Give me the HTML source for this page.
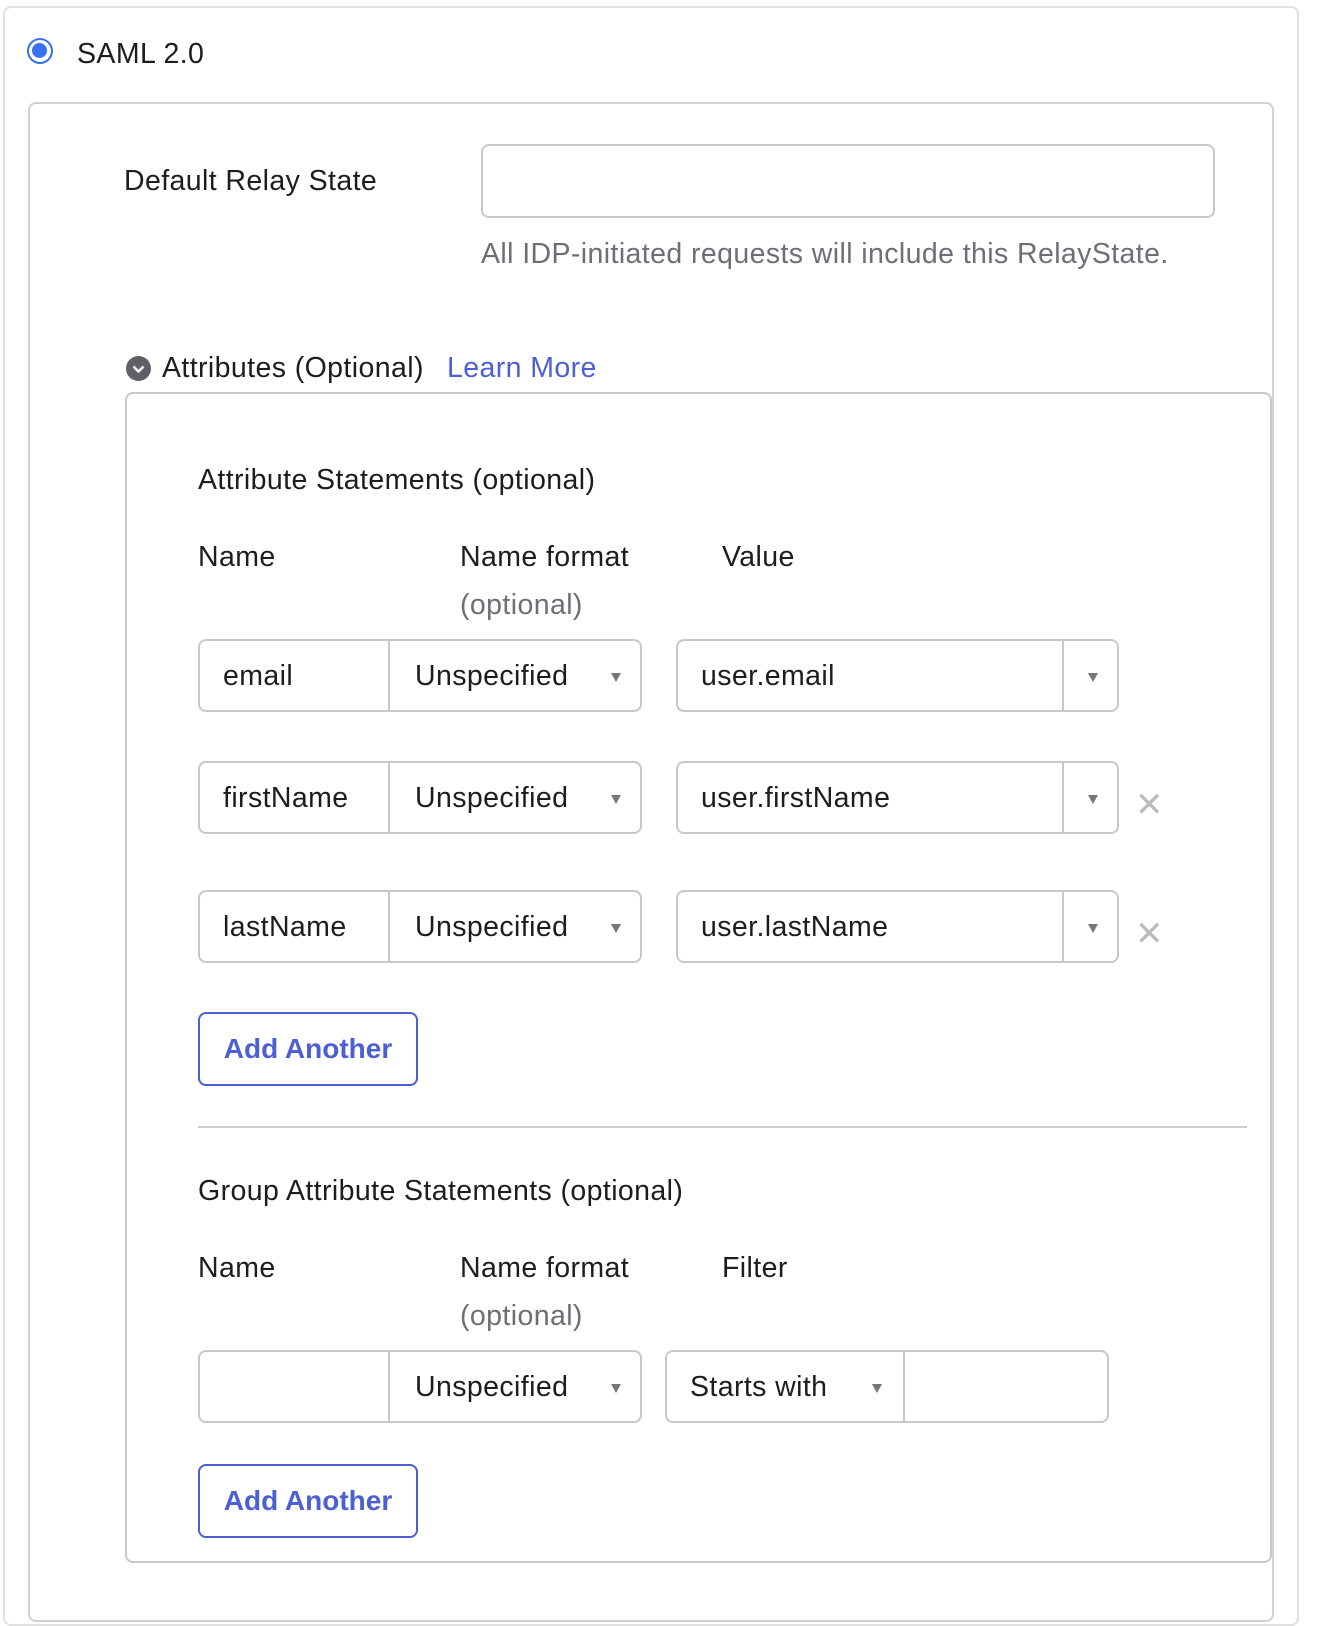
<!DOCTYPE html>
<html><head><style>
*{box-sizing:border-box;margin:0;padding:0}
body{width:1321px;height:1590px;background:#fff;font-family:"Liberation Sans",sans-serif;color:#1d1d21;position:relative;overflow:hidden}
.a{position:absolute}
.t{position:absolute;font-size:28.5px;letter-spacing:0.4px;white-space:nowrap;line-height:1}
.box{position:absolute;border:2px solid #c8c8c8;border-radius:8px;background:#fff}
.g{color:#6e6e78}
.div{position:absolute;top:0;bottom:0;width:2px;background:#c8c8c8}
.tri{position:absolute;width:0;height:0;border-left:5px solid transparent;border-right:5px solid transparent;border-top:9px solid #777}
.btn{position:absolute;border:2px solid #4c5fd5;border-radius:8px;color:#4c5fd5;font-weight:bold;font-size:28px;display:flex;align-items:center;justify-content:center}
.x{position:absolute;font-size:34px;color:#bbb;line-height:1}
</style></head><body>
<div class="box" style="left:3px;top:6px;width:1296px;height:1620px;border-color:#e0e0e0"></div>
<div class="a" style="left:27px;top:38px;width:26px;height:26px;border-radius:50%;border:2.5px solid #3a6ff0;background:#fff"><div class="a" style="left:3px;top:3px;width:15px;height:15px;border-radius:50%;background:#3a6ff0"></div></div>
<div class="t" style="left:77px;top:40px">SAML 2.0</div>
<div class="box" style="left:28px;top:102px;width:1246px;height:1520px;border-color:#d0d0d0"></div>
<div class="t" style="left:124px;top:167px">Default Relay State</div>
<div class="box" style="left:481px;top:144px;width:734px;height:74px"></div>
<div class="t g" style="left:481px;top:240px">All IDP-initiated requests will include this RelayState.</div>
<div class="a" style="left:126px;top:356px;width:25px;height:25px;border-radius:50%;background:#5f5f66"><svg width="25" height="25" viewBox="0 0 25 25"><path d="M7.5 10.5 L12.5 15.5 L17.5 10.5" stroke="#fff" stroke-width="2.5" fill="none"/></svg></div>
<div class="t" style="left:162px;top:354px">Attributes (Optional)</div>
<div class="t" style="left:447px;top:354px;color:#4c5fd5">Learn More</div>
<div class="box" style="left:125px;top:392px;width:1147px;height:1171px"></div>
<div class="t" style="left:198px;top:466px">Attribute Statements (optional)</div>
<div class="t" style="left:198px;top:543px">Name</div>
<div class="t" style="left:460px;top:543px">Name format</div>
<div class="t g" style="left:460px;top:591px">(optional)</div>
<div class="t" style="left:722px;top:543px">Value</div>

<div class="box" style="left:198px;top:639px;width:444px;height:73px"><div class="div" style="left:188px"></div><div class="t" style="left:23px;top:21px">email</div><div class="t" style="left:215px;top:21px">Unspecified</div><div class="tri" style="left:411px;top:32px"></div></div>
<div class="box" style="left:676px;top:639px;width:443px;height:73px"><div class="div" style="left:384px"></div><div class="t" style="left:23px;top:21px">user.email</div><div class="tri" style="left:410px;top:32px"></div></div>

<div class="box" style="left:198px;top:761px;width:444px;height:73px"><div class="div" style="left:188px"></div><div class="t" style="left:23px;top:21px">firstName</div><div class="t" style="left:215px;top:21px">Unspecified</div><div class="tri" style="left:411px;top:32px"></div></div>
<div class="box" style="left:676px;top:761px;width:443px;height:73px"><div class="div" style="left:384px"></div><div class="t" style="left:23px;top:21px">user.firstName</div><div class="tri" style="left:410px;top:32px"></div></div>
<div class="x" style="left:1135px;top:788px">✕</div>

<div class="box" style="left:198px;top:890px;width:444px;height:73px"><div class="div" style="left:188px"></div><div class="t" style="left:23px;top:21px">lastName</div><div class="t" style="left:215px;top:21px">Unspecified</div><div class="tri" style="left:411px;top:32px"></div></div>
<div class="box" style="left:676px;top:890px;width:443px;height:73px"><div class="div" style="left:384px"></div><div class="t" style="left:23px;top:21px">user.lastName</div><div class="tri" style="left:410px;top:32px"></div></div>
<div class="x" style="left:1135px;top:917px">✕</div>

<div class="btn" style="left:198px;top:1012px;width:220px;height:74px">Add Another</div>
<div class="a" style="left:198px;top:1126px;width:1049px;height:2px;background:#cfcfcf"></div>

<div class="t" style="left:198px;top:1177px">Group Attribute Statements (optional)</div>
<div class="t" style="left:198px;top:1254px">Name</div>
<div class="t" style="left:460px;top:1254px">Name format</div>
<div class="t g" style="left:460px;top:1302px">(optional)</div>
<div class="t" style="left:722px;top:1254px">Filter</div>

<div class="box" style="left:198px;top:1350px;width:444px;height:73px"><div class="div" style="left:188px"></div><div class="t" style="left:215px;top:21px">Unspecified</div><div class="tri" style="left:411px;top:32px"></div></div>
<div class="box" style="left:665px;top:1350px;width:444px;height:73px"><div class="div" style="left:236px"></div><div class="t" style="left:23px;top:21px">Starts with</div><div class="tri" style="left:205px;top:32px"></div></div>

<div class="btn" style="left:198px;top:1464px;width:220px;height:74px">Add Another</div>
</body></html>
